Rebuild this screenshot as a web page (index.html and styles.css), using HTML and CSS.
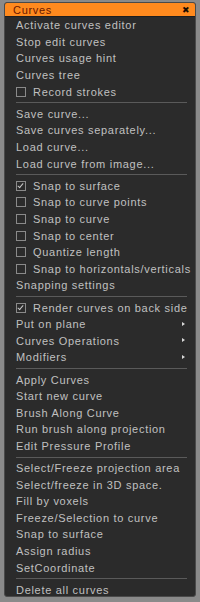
FILE: index.html
```html
<!DOCTYPE html>
<html lang="en">
<head>
    <meta charset="UTF-8">
    <title>Curves</title>
    <link rel="stylesheet" href="styles.css">
</head>
<body>
    <div class="menu">
        <div class="menu-header">
            <span class="menu-title">Curves</span>
            <span class="menu-close">&#x2716;</span>
        </div>
        <div class="menu-body">
            <div class="item">Activate curves editor</div>
            <div class="item">Stop edit curves</div>
            <div class="item">Curves usage hint</div>
            <div class="item">Curves tree</div>
            <div class="item"><span class="check"></span>Record strokes</div>
            <div class="sep"></div>
            <div class="item">Save curve...</div>
            <div class="item">Save curves separately...</div>
            <div class="item">Load curve...</div>
            <div class="item">Load curve from image...</div>
            <div class="sep"></div>
            <div class="item"><span class="check checked"></span>Snap to surface</div>
            <div class="item"><span class="check"></span>Snap to curve points</div>
            <div class="item"><span class="check"></span>Snap to curve</div>
            <div class="item"><span class="check"></span>Snap to center</div>
            <div class="item"><span class="check"></span>Quantize length</div>
            <div class="item"><span class="check"></span>Snap to horizontals/verticals</div>
            <div class="item">Snapping settings</div>
            <div class="sep"></div>
            <div class="item"><span class="check checked"></span>Render curves on back side</div>
            <div class="item sub">Put on plane</div>
            <div class="item sub">Curves Operations</div>
            <div class="item sub">Modifiers</div>
            <div class="sep"></div>
            <div class="item">Apply Curves</div>
            <div class="item">Start new curve</div>
            <div class="item">Brush Along Curve</div>
            <div class="item">Run brush along projection</div>
            <div class="item">Edit Pressure Profile</div>
            <div class="sep"></div>
            <div class="item">Select/Freeze projection area</div>
            <div class="item">Select/freeze in 3D space.</div>
            <div class="item">Fill by voxels</div>
            <div class="item">Freeze/Selection to curve</div>
            <div class="item">Snap to surface</div>
            <div class="item">Assign radius</div>
            <div class="item">SetCoordinate</div>
            <div class="sep"></div>
            <div class="item">Delete all curves</div>
        </div>
    </div>
</body>
</html>
```

FILE: styles.css
```css
body {
    margin: 0;
    background-color: #8a8a8a;
    font-family: "Liberation Sans", Arial, sans-serif;
}
.menu {
    margin: 2px 4px 0 4px;
    width: 192px;
    height: 595px;
    box-sizing: border-box;
    background-color: #2b2b2b;
    border: 1px solid #4a4a4a;
    border-radius: 3px;
    overflow: hidden;
}
.menu-header {
    display: flex;
    align-items: center;
    justify-content: space-between;
    height: 13px;
    padding: 0 5px 0 8px;
    background-color: #ff8a1e;
    border-bottom: 1px solid #1e1e1e;
}
.menu-title {
    font-size: 11px;
    color: #6a1800;
    letter-spacing: 0.7px;
}
.menu-close {
    font-size: 9px;
    color: #1a0a00;
}
.menu-body {
    padding: 0 10px 0 11px;
}
.item {
    position: relative;
    display: flex;
    align-items: center;
    height: 16.6px;
    font-size: 11px;
    color: #c0c0c0;
    letter-spacing: 0.7px;
    white-space: nowrap;
}
.check {
    width: 8px;
    height: 8px;
    margin-right: 7px;
    border: 1px solid #8a8a8a;
    flex-shrink: 0;
    position: relative;
}
.check.checked::after {
    content: "";
    position: absolute;
    left: 2px;
    top: 0px;
    width: 2px;
    height: 5px;
    border: solid #c8c8c8;
    border-width: 0 1px 1px 0;
    transform: rotate(40deg);
}
.sub::after {
    content: "";
    position: absolute;
    right: 0;
    top: 6px;
    border-left: 3px solid #d8d8d8;
    border-top: 2.5px solid transparent;
    border-bottom: 2.5px solid transparent;
}
.sep {
    height: 1px;
    margin: 2.3px -2px 2.3px 0;
    background-color: #5a5a5a;
}
```
